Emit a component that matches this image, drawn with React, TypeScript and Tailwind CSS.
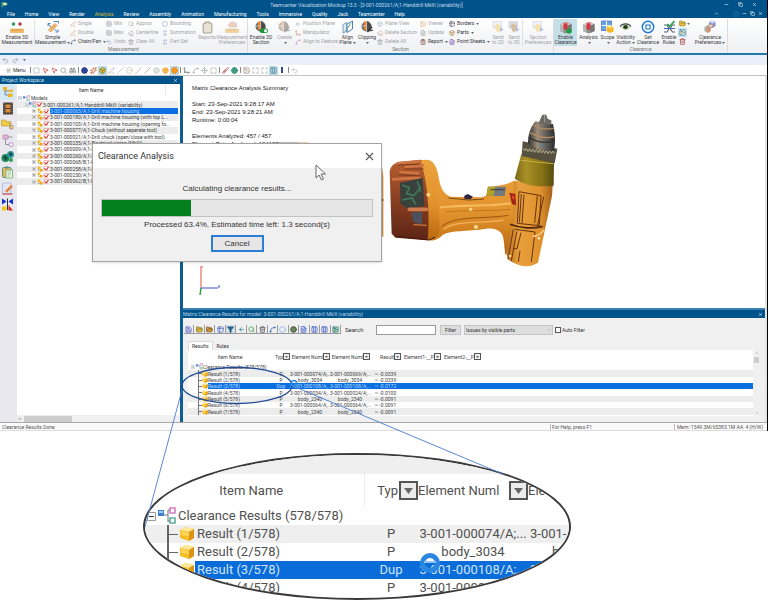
import type { ReactNode } from 'react'
import {
  ArrowLeft, Binoculars, Box, BoxSelect, Brush, Circle, CircleDot, Clipboard, ClipboardList, Columns3, Eraser,
  FileText, Filter, FolderOpen, Globe, Grid2x2, Image, Maximize, Menu, Minus, MousePointer2, Move, Move3d, PenLine,
  Redo2, Save, Search, Sigma, Slash, Sparkles, Spline, Table2, Trash2, Undo2, X, Copy, HelpCircle, ChevronUp, ChevronDown,
} from 'lucide-react'

type IconType = typeof Box

function Mini({ icon: Icon, color = '#777', size = 7, fill = 'none' }: { icon: IconType; color?: string; size?: number; fill?: string }) {
  return <Icon size={size} color={color} fill={fill} strokeWidth={2.5} className="shrink-0" aria-hidden />
}

/* ---------- drawings ---------- */

function YellowCube({ size = 6 }: { size?: number }) {
  return (
    <svg width={size} height={size} viewBox="0 0 16 16" className="shrink-0">
      <path d="M1 4 6 1l9 2v9l-5 3-9-3z" fill="#f7bd26" />
      <path d="M1 4 6 1l9 2-5 3z" fill="#ffe998" />
      <path d="M10 6l5-3v9l-5 3z" fill="#dd9416" />
      <path d="M2 5l8 2v3L2 9z" fill="#ffd65a" />
    </svg>
  )
}

function NodeIcon({ size = 7 }: { size?: number }) {
  return (
    <svg width={size} height={size} viewBox="0 0 18 18" className="shrink-0">
      <path d="M0 3h6v6H0z" fill="#3d7fd0" />
      <path d="M1 4h4v2H1z" fill="#a9cdf5" />
      <path d="M6 8h4M10 3v12M10 3h3M10 14h3" stroke="#777" fill="none" />
      <path d="M12 1h5v5h-5z" fill="#fff" stroke="#d67cc0" strokeWidth="1.6" />
      <path d="M12 11h5v5h-5z" fill="#fff" stroke="#5bb09e" strokeWidth="1.6" />
    </svg>
  )
}

function RedCheck() {
  return (
    <svg width="7" height="5" viewBox="0 0 14 10" className="shrink-0">
      <path d="M2 1h7v8H2z" fill="#fff" stroke="#e07a7a" />
      <path d="M3 4l3 4 6-7" fill="none" stroke="#e02020" strokeWidth="2" />
    </svg>
  )
}

function PartIcon() {
  return (
    <svg width="6" height="6" viewBox="0 0 12 12" className="shrink-0">
      <path d="M1 1h6v5H1z" fill="#f2bd27" />
      <path d="M6 6h5v5H6z" fill="#e9a715" />
      <path d="M3 6v3h3" fill="none" stroke="#8a7332" />
    </svg>
  )
}

function Expander({ open = false, size = 4 }: { open?: boolean; size?: number }) {
  return (
    <svg width={size} height={size} viewBox="0 0 9 9" className="shrink-0">
      <path d="M.5.5h8v8h-8z" fill="#fff" stroke="#999" />
      <path d={open ? 'M2 4.500h5' : 'M2 4.500h5M4.500 2v5'} stroke="#333" />
    </svg>
  )
}

function Blocks({ main = '#d9343b', side = '#8d8d8d', badge }: { main?: string; side?: string; badge?: string }) {
  return (
    <svg width="14" height="13" viewBox="0 0 28 26">
      <path d="M2 7 13 2l12 4v14l-12 5-11-5z" fill={side} />
      <path d="M2 7l7 3v13l-7-3z" fill="#b5b5b5" />
      <path d="M2 7l11-5 12 4-12 5z" fill="#d2d2d2" />
      <path d="M9 4l8 1v13l-8-2z" fill={main} />
      <path d="M9 4l5-2 7 2-4 1z" fill="#e8767a" />
      <path d="M17 9l8-3v14l-8 4z" fill="#777" />
      {badge && <circle cx="20" cy="20" r="5.500" fill={badge} />}
    </svg>
  )
}

function SectionIcon({ toggle = false, faded = false }: { toggle?: boolean; faded?: boolean }) {
  return (
    <svg width="15" height="14" viewBox="0 0 30 28" opacity={faded ? 0.45 : 1}>
      <circle cx="13" cy="13" r="10" fill="#6d6d6d" />
      <path d="M8 4l9-2v20l-9-3z" fill="#ef7d22" />
      <path d="M13 3a10 10 0 0 1 0 20z" fill="#4d4d4d" />
      <path d="M3 12h9M13 3v20" stroke="#ddd" strokeWidth="1.500" />
      {toggle
        ? <><rect x="11" y="17" width="17" height="9" rx="4.500" fill="#23933b" /><circle cx="23" cy="21.500" r="3" fill="#fff" /></>
        : <path d="M15 24l9-10M19 22l7-2" stroke="#333" strokeWidth="2.500" />}
    </svg>
  )
}

function RulerIcon({ hand = false }: { hand?: boolean }) {
  return (
    <svg width="14" height="14" viewBox="0 0 28 28" opacity={hand ? 0.6 : 1}>
      {hand
        ? <path d="M6 10l8-7 9 4v7H9z" fill="#e9b48a" stroke="#8893c0" />
        : <><circle cx="7" cy="8" r="3.500" fill="#2c9b57" /><circle cx="20" cy="8" r="3.500" fill="#b03a3a" /></>}
      <path d="M1 18h26v7H1z" fill="#f3b963" stroke="#e0a04a" />
      <path d="M5 18v3M9 18v4M13 18v3M17 18v4M21 18v3" stroke="#b5752a" />
    </svg>
  )
}

function SimpleMeasureIcon() {
  return (
    <svg width="14" height="14" viewBox="0 0 28 28">
      <path d="M5 20 18 7l4 4L9 24z" fill="#f7c27c" stroke="#e0872a" strokeWidth="1.500" />
      <path d="M9 16l3 3M12 13l3 3M15 10l3 3" stroke="#a9601a" />
      <path d="M4 8l6 6M17 18l5 5M4 12V7h5M24 19v5h-5M15 3h10v4" fill="none" stroke="#3c7bb5" strokeWidth="1.800" />
    </svg>
  )
}

function AlignPlaneIcon() {
  return (
    <svg width="12" height="14" viewBox="0 0 24 28">
      <path d="M2 9l8-4v17l-8 4z" fill="#dfe9f5" stroke="#5b84b5" strokeWidth="1.500" />
      <path d="M10 8l11-6v16l-11 7z" fill="#fff" stroke="#3971b0" strokeWidth="1.800" />
      <path d="M7 22 18 6" stroke="#4ba56a" strokeWidth="2" />
    </svg>
  )
}

function ScopeIcon() {
  return (
    <svg width="13" height="14" viewBox="0 0 26 28">
      <path d="M1 2h20v19H1z" fill="#6ba3e4" stroke="#3b72bd" strokeWidth="1.500" />
      <path d="M11 2v19M1 11h20" stroke="#fff" strokeWidth="2" />
      <path d="M11 14l6-3 8 3v9l-7 3-7-4z" fill="#f6b522" />
      <path d="M11 14l6-3 8 3-7 3z" fill="#ffe07c" />
    </svg>
  )
}

function EyeIcon() {
  return (
    <svg width="13" height="14" viewBox="0 0 26 28">
      <path d="M3 15c5-6 15-6 20 0-5 5-15 5-20 0z" fill="#cbd3bd" />
      <circle cx="13" cy="14" r="5" fill="#53803e" />
      <circle cx="13" cy="14" r="2.500" fill="#111" />
      <path d="M2 13c5-7 17-7 22 0" fill="none" stroke="#444" strokeWidth="2.200" />
    </svg>
  )
}

function TargetIcon() {
  return (
    <svg width="14" height="14" viewBox="0 0 28 28">
      <circle cx="14" cy="14" r="11.500" fill="#eef6ff" stroke="#2478c8" strokeWidth="2.800" />
      <path d="M10 10h8v8h-8z" fill="#fff" stroke="#2478c8" strokeWidth="2.200" />
    </svg>
  )
}

function RulesIcon() {
  return (
    <svg width="13" height="14" viewBox="0 0 26 28">
      <path d="M2 10h6l4 7-4 7H2M24 10h-5l-5 7 5 7h5" fill="none" stroke="#5c6370" strokeWidth="2.200" />
      <path d="M2 17h22" stroke="#3d68c2" strokeWidth="2" />
      <path d="M9 8l4 5L23 2" fill="none" stroke="#24a046" strokeWidth="3.200" />
    </svg>
  )
}

function ClearancePrefsIcon() {
  return (
    <svg width="14" height="14" viewBox="0 0 28 28">
      <path d="M12 4l6-3 7 3v8l-6 4-7-3z" fill="#8591d8" />
      <path d="M12 4l6-3 7 3-6 3z" fill="#d4d9f6" />
      <path d="M3 14l6-3 6 3v8l-6 4-6-4z" fill="#b5aaa2" />
      <path d="M9 17l6-3v8l-6 4z" fill="#d98c66" />
      <path d="M8 12l8-4 6 3-7 5z" fill="#e9cbb6" stroke="#8a6d5c" />
    </svg>
  )
}

function SendIcon({ view }: { view: 'blue' | 'solid' }) {
  return (
    <svg width="13" height="14" viewBox="0 0 26 28" opacity="0.55">
      <path d="M2 3h17v13H2z" fill={view === 'blue' ? '#e6edfa' : '#c4c4c4'} stroke="#8ea3cf" />
      <path d="M5 12l5-5 7 3v11l-7 4z" fill={view === 'blue' ? '#f6ce73' : '#b78c5c'} />
      <path d="M16 15l7 4-7 5z" fill="#7792cf" />
    </svg>
  )
}

function DrillScene() {
  return (
    <svg width="190" height="180" viewBox="0 0 570 540" overflow="visible" role="img" aria-label="Handdrill MkIII model">
      <defs>
        <linearGradient id="body" x1="0" x2="0" y1="0" y2="1">
          <stop offset="0" stopColor="#eda33c" /><stop offset=".55" stopColor="#e2922c" /><stop offset="1" stopColor="#b8680f" />
        </linearGradient>
        <linearGradient id="motor" x1="0" x2="1" y1="0" y2="0">
          <stop offset="0" stopColor="#b26817" /><stop offset=".3" stopColor="#e8a03d" /><stop offset=".75" stopColor="#df922c" /><stop offset="1" stopColor="#a5611a" />
        </linearGradient>
        <linearGradient id="battery" x1="0" x2="0" y1="0" y2="1">
          <stop offset="0" stopColor="#b95f32" /><stop offset=".45" stopColor="#8d4223" /><stop offset="1" stopColor="#5d2415" />
        </linearGradient>
        <linearGradient id="steel" x1="0" x2="1" y1="0" y2="0">
          <stop offset="0" stopColor="#2f2e2e" /><stop offset=".35" stopColor="#9d8c79" /><stop offset=".6" stopColor="#6d6964" /><stop offset="1" stopColor="#2c2c2d" />
        </linearGradient>
        <linearGradient id="olive" x1="0" x2="1" y1="0" y2="0">
          <stop offset="0" stopColor="#7d6a16" /><stop offset=".3" stopColor="#a88f26" /><stop offset=".7" stopColor="#857114" /><stop offset="1" stopColor="#574b12" />
        </linearGradient>
      </defs>
      {/* second housing half, mostly covered by the dialog */}
      <path d="M-315 128h70v40h-70z" fill="#3b302c" />
      <path d="M-245 128h30v40h-30z" fill="#c97a26" />
      <path d="M-90 205h97l3 25v180H-90z" fill="#c98d45" />
      <path d="M0 300h10" stroke="#5d3413" strokeWidth="5" />
      {/* handle */}
      <path d="M125 185C160 178 171 195 176 232c5 32 14 50 36 58l93 2 13-5 6-26 26-3 30-6 22-10 10 158-36 66-5-46c-2-26-22-38-52-34-60 9-105 4-130 18-14 15-30 20-46 16z" fill="url(#body)" />
      <path d="M185 380c40-35 130-22 200-34" fill="none" stroke="#9c5412" strokeWidth="3" />
      <path d="M190 388c40-30 120-16 180-28" fill="none" stroke="#f0b057" strokeWidth="4" />
      <path d="M205 294l62 6 45-3" fill="none" stroke="#7a4a16" strokeWidth="3" />
      <path d="M253 287l10-5 16 8-8 8-18-2z" fill="#302443" />
      <path d="M180 322c70-8 150-2 212-12" fill="none" stroke="#f5bb5e" strokeWidth="7" />
      <path d="M196 336c70-6 140-2 196-8" fill="none" stroke="#b06a1d" strokeWidth="2" />
      <circle cx="288" cy="381" r="6" fill="#ffdb8f" /><circle cx="272" cy="328" r="5" fill="#ffd583" />
      {/* trigger */}
      <path d="M324 260h54l-4 28h-54z" fill="#737b7d" /><path d="M324 260h22l-6 27h-20z" fill="#b3a325" />
      <path d="M332 269h42" stroke="#353b3d" strokeWidth="3" />
      {/* battery */}
      <path d="M50 187 122 179l28 5 10 38 6 170-25 29-94-8-12-12-6-186c2-12 8-22 21-26z" fill="url(#battery)" />
      <path d="M122 182c18-6 36-2 43 16 4 60 12 130 14 196l-12 20-24 6c6-60 2-140-10-196z" fill="url(#body)" />
      <path d="M50 190l70-6M74 201l58-5M58 216l60 4M36 238l85-5" stroke="#cf7544" strokeWidth="8" fill="none" />
      <path d="M52 195l66-2M74 207l57 0M57 224l64 4" stroke="#5d2a17" strokeWidth="2" fill="none" />
      <path d="M60 248l68-14 5 84-50 8-22-15z" fill="#39413c" />
      <path d="M66 255l22 8-8 18 22 6 20-26M66 300l30-6 12 20M112 244l10 32" fill="none" stroke="#3f7a59" strokeWidth="5" />
      <path d="M88 328h52" stroke="#d07c50" strokeWidth="11" strokeLinecap="round" />
      <path d="M94 338l32-3v38l-26-6z" fill="#4d515d" />
      <path d="M100 374l40 2" stroke="#cf7544" strokeWidth="4" />
      <path d="M44 408l103 12 18-8" fill="none" stroke="#45170d" strokeWidth="3" />
      <circle cx="145" cy="284" r="6" fill="#ffd583" />
      {/* motor housing */}
      <path d="M402 242 518 258l-2 30-42 200c-28 18-62 12-90-10l-10-35 24-70z" fill="url(#motor)" />
      <path d="M417 275l66 12-5 90-66-7zM405 388l60 8-11 90M424 282l-6 85M432 284l-6 85M472 287l-8 82M491 290l-19 90" fill="none" stroke="#69300f" strokeWidth="3" />
      <path d="M400 388l-16 90M410 395l-16 88M423 398l-12 48h-12M420 452l-5 34" fill="none" stroke="#6b3210" strokeWidth="3" />
      <path d="M390 373c30 12 70 14 98 6" fill="none" stroke="#4e260d" strokeWidth="5" />
      <path d="M388 278l18 4 2 34-12-4z" fill="#9f2414" /><path d="M394 284l10 8-4 8z" fill="#ff4b2f" />
      <path d="M458 409c18 0 28-10 34-20" fill="none" stroke="#ffc984" strokeWidth="5" />
      <circle cx="477" cy="415" r="4" fill="#ffe1a4" /><circle cx="390" cy="468" r="4" fill="#ffd583" />
      {/* collar and chuck */}
      <path d="M424 163l98 18-1 76c-45 6-90-2-117-21z" fill="url(#olive)" />
      <path d="M422 181l98 10" stroke="#c7b23e" strokeWidth="3" />
      <path d="M428 124l104 22-8 44-99-22z" fill="#55503f" />
      <path d="M430 145l4 8 5-8 5 10 5-9 5 10 5-9 5 10 5-9 5 10 5-9 5 10 5-9 5 10 5-9 5 10 5-9 5 9 5-8 4 8" fill="none" stroke="#b5ab8c" strokeWidth="3" />
      <path d="M466 64l53 8c6 25 8 50 3 80-28 4-56-4-78-20 0-28 6-48 22-68z" fill="url(#steel)" />
      <path d="M459 75c18 12 40 14 62 10M449 98c22 12 50 18 74 12" fill="none" stroke="#b58c64" strokeWidth="4" />
      <path d="M446 112c22 14 52 18 78 12" fill="none" stroke="#333" strokeWidth="4" />
      <path d="M482 55l5-11 12 0 4 12 12 6-3 12-36-4z" fill="#6a6964" />
      <path d="M494 44v22" stroke="#a3a196" strokeWidth="3" /><circle cx="485" cy="136" r="4" fill="#5f82a5" />
    </svg>
  )
}

function AxisTriad() {
  return (
    <svg width="26" height="32" viewBox="0 0 26 32">
      <path d="M6 4v18" stroke="#e0503c" /><path d="M6 22h17" stroke="#3c50d0" /><path d="M6 22l-1 7" stroke="#2ca03c" strokeWidth="1.500" />
      <path d="M5 1h3M5 3h2" stroke="#e0503c" /><path d="M24 19v3" stroke="#3c50d0" />
    </svg>
  )
}

/* ---------- ribbon ---------- */

function Arrow() {
  return <svg width="3" height="2" viewBox="0 0 6 4" className="inline-block align-middle ml-px"><path d="M0 0h6L3 4z" fill="#666" /></svg>
}

function Big({ icon, lines, className, faded, arrow, active }: {
  icon: ReactNode; lines: string[]; className: string; faded?: boolean; arrow?: boolean; active?: boolean
}) {
  return (
    <button className={`flex flex-col items-center whitespace-nowrap shrink-0 h-[27px] ${className} ${faded ? 'text-[#a3a3a8]' : 'text-[#3d3d42]'} ${active ? 'bg-[#c5dfe9]' : ''}`}>
      <span className="h-[16px] flex items-center">{icon}</span>
      {lines.map((line, i) => <span key={line}>{line}{arrow && i === lines.length - 1 && lines.length > 1 && <Arrow />}</span>)}
      {arrow && lines.length === 1 && <span><Arrow /></span>}
    </button>
  )
}

type SmallItem = { icon: IconType; label: string; color: string; on?: boolean; arrow?: boolean }

function SmallCol({ items, className }: { items: SmallItem[]; className: string }) {
  return (
    <div className={`flex flex-col shrink-0 ${className}`}>
      {items.map(it => (
        <button key={it.label} className={`h-[9px] flex items-center gap-px whitespace-nowrap ${it.on ? 'text-[#333338]' : 'text-[#a3a3a8]'}`}>
          <span className={it.on ? 'mr-px' : 'mr-px opacity-60'}><Mini icon={it.icon} color={it.color} size={6} /></span>
          {it.label}{it.arrow && <Arrow />}
        </button>
      ))}
    </div>
  )
}

function Group({ label, className, children }: { label: string; className: string; children: ReactNode }) {
  return (
    <section className={`shrink-0 border-r border-[#dcdce0] ${className}`} aria-label={label}>
      <div className="flex h-[28px]">{children}</div>
      <p className="text-center text-[#77777c]">{label}</p>
    </section>
  )
}

const TABS = ['File', 'Home', 'View', 'Render', 'Analysis', 'Review', 'Assembly', 'Animation', 'Manufacturing', 'Tools', 'Immersive', 'Quality', 'Jack', 'Teamcenter', 'Help']

function TitleBar() {
  return (
    <header className="bg-[#00528a] text-white text-[5px] leading-[8px]">
      <div className="flex items-center h-[9px] px-px">
        <svg width="8" height="8" viewBox="0 0 16 16"><path d="M1 2h9l4 5-5 3H5l-4 4z" fill="#4b9b7a" /><path d="M4 4h7v4H5z" fill="#d9e8c0" /></svg>
        <h1 className="flex-1 text-center text-[#c9dceb]">Teamcenter Visualization Mockup 13.3 - [3-001-000261/A;1-Handdrill MkIII (variability)]</h1>
        <div className="flex gap-[9px] pr-[9px]">
          <button aria-label="Minimize"><Mini icon={Minus} color="#fff" size={5} /></button>
          <button aria-label="Restore"><Mini icon={Copy} color="#fff" size={5} /></button>
          <button aria-label="Close"><Mini icon={X} color="#fff" size={5} /></button>
        </div>
      </div>
      <nav className="flex items-center h-[9px]">
        <div className="flex gap-[10px] pl-[7px] flex-1">
          {TABS.map(t => (
            <a key={t} href="#" className={t === 'Analysis' ? 'text-[#d8bf2c]' : ''}>{t}</a>
          ))}
        </div>
        <div className="flex gap-[3px] pr-1">
          <button className="mr-[11px]" aria-label="Collapse ribbon"><Mini icon={ChevronUp} color="#fff" size={5} /></button>
          <button aria-label="Help"><Mini icon={HelpCircle} color="#2a759f" size={6} /></button>
          <button aria-label="Minimize view"><Mini icon={Minus} color="#fff" size={5} /></button>
          <button aria-label="Restore view"><Mini icon={Copy} color="#fff" size={5} /></button>
          <button aria-label="Close view"><Mini icon={X} color="#fff" size={5} /></button>
        </div>
      </nav>
    </header>
  )
}

function Ribbon() {
  return (
    <div className="flex h-[37px] pt-px bg-linear-to-b from-white to-[#eeeff2] border-b-2 border-[#2379a8] text-[5px] leading-[5px] overflow-hidden">
      <Group label="Measurement" className="w-[248px]">
        <Big className="w-[35px] border-r border-[#e2e2e6]" icon={<RulerIcon />} lines={['Enable 3D', 'Measurement']} />
        <Big className="w-[35px]" icon={<SimpleMeasureIcon />} lines={['Simple', 'Measurement']} arrow />
        <SmallCol className="w-[36px]" items={[
          { icon: PenLine, label: 'Single', color: '#c98b3d' },
          { icon: PenLine, label: 'Double', color: '#c98b3d' },
          { icon: Spline, label: 'Chain/Fan', color: '#55708f', on: true, arrow: true },
        ]} />
        <SmallCol className="w-[22px]" items={[
          { icon: Grid2x2, label: 'Min', color: '#667' },
          { icon: Grid2x2, label: 'Max', color: '#667' },
          { icon: Undo2, label: 'Undo', color: '#5372c4' },
        ]} />
        <SmallCol className="w-[34px]" items={[
          { icon: Search, label: 'Approx', color: '#777' },
          { icon: Eraser, label: 'Centerline', color: '#777' },
          { icon: Trash2, label: 'Clear All', color: '#777' },
        ]} />
        <SmallCol className="w-[35px]" items={[
          { icon: BoxSelect, label: 'Bounding', color: '#4868b0' },
          { icon: Sigma, label: 'Summation', color: '#4868b0' },
          { icon: Sigma, label: 'Part Set', color: '#4868b0' },
        ]} />
        <Big className="w-[20px]" icon={<Clipboard size={13} color="#a9a294" fill="#e8e2d4" />} lines={['Reports']} faded />
        <Big className="w-[30px]" icon={<RulerIcon hand />} lines={['Measurement', 'Preferences']} faded />
      </Group>
      <Group label="Section" className="w-[306px]">
        <Big className="w-[26px]" icon={<SectionIcon toggle />} lines={['Enable 3D', 'Section']} />
        <Big className="w-[21px]" icon={<SectionIcon faded />} lines={['Create']} faded arrow />
        <SmallCol className="w-[43px]" items={[
          { icon: ArrowLeft, label: 'Position Plane', color: '#5b7dd0' },
          { icon: Move3d, label: 'Manipulator', color: '#c05a4a' },
          { icon: Spline, label: 'Align to Feature', color: '#b05a9a' },
        ]} />
        <Big className="w-[19px]" icon={<AlignPlaneIcon />} lines={['Align', 'Plane']} arrow />
        <Big className="w-[20px]" icon={<SectionIcon />} lines={['Clipping']} arrow />
        <SmallCol className="w-[43px]" items={[
          { icon: Box, label: 'Plane View', color: '#7f8fc0' },
          { icon: Eraser, label: 'Delete Section', color: '#c07a6a' },
          { icon: Trash2, label: 'Delete All', color: '#777' },
        ]} />
        <SmallCol className="w-[29px]" items={[
          { icon: Image, label: 'Viewer', color: '#c09a4a' },
          { icon: FileText, label: 'Update', color: '#777' },
          { icon: ClipboardList, label: 'Report', color: '#7d4a3d', on: true, arrow: true },
        ]} />
        <SmallCol className="w-[41px]" items={[
          { icon: Table2, label: 'Borders', color: '#5a5f7a', on: true, arrow: true },
          { icon: Box, label: 'Parts', color: '#a5762a', on: true, arrow: true },
          { icon: FileText, label: 'Point Sheets', color: '#7a5fb0', on: true, arrow: true },
        ]} />
        <Big className="w-[16px]" icon={<SendIcon view="blue" />} lines={['Send', 'to 2D']} faded />
        <Big className="w-[17px] border-r border-[#e2e2e6]" icon={<SendIcon view="solid" />} lines={['Send', 'to 3D']} faded />
        <Big className="w-[30px]" icon={<SendIcon view="blue" />} lines={['Section', 'Preferences']} faded />
      </Group>
      <Group label="Clearance" className="w-[174px]">
        <Big className="w-[23px]" icon={<Blocks badge="#1f9a44" />} lines={['Enable', 'Clearance']} active />
        <Big className="w-[23px]" icon={<Blocks />} lines={['Analysis']} arrow />
        <Big className="w-[15px]" icon={<ScopeIcon />} lines={['Scope']} arrow />
        <Big className="w-[21px]" icon={<EyeIcon />} lines={['Visibility', 'Action']} arrow />
        <Big className="w-[24px]" icon={<TargetIcon />} lines={['Set', 'Clearance']} />
        <Big className="w-[18px]" icon={<RulesIcon />} lines={['Enable', 'Rules']} />
        <div className="flex flex-col w-[15px] shrink-0 items-start">
          <button className="h-[9px] px-px flex items-center" aria-label="Open results"><Mini icon={FolderOpen} color="#8a7a2a" fill="#f0c33a" /><Arrow /></button>
          <button className="h-[9px] px-px flex items-center bg-[#bfe0f0]" aria-label="Show results"><Mini icon={Image} color="#3f7fc4" fill="#fbe9a8" /></button>
          <button className="h-[9px] px-px flex items-center" aria-label="Delete results"><Mini icon={Trash2} color="#a84b4b" /></button>
        </div>
        <Big className="w-[34px]" icon={<ClearancePrefsIcon />} lines={['Clearance', 'Preferences']} arrow />
      </Group>
    </div>
  )
}

const TOOLS: ({ icon: IconType; color: string; name: string; on?: boolean; fill?: string } | null)[] = [
  null,
  { icon: BoxSelect, color: '#999', name: 'Select box' },
  { icon: MousePointer2, color: '#d04040', name: 'Pick' },
  { icon: MousePointer2, color: '#d04040', name: 'Pick all' },
  { icon: Search, color: '#999', name: 'Seek' },
  { icon: Binoculars, color: '#888', name: 'Find' },
  null,
  { icon: Circle, color: '#23307a', fill: '#34449c', name: 'Sphere' },
  { icon: Sparkles, color: '#c0603a', name: 'Shade' },
  { icon: Box, color: '#8a7a2a', fill: '#e0c040', name: 'Solid', on: true },
  { icon: PenLine, color: '#bbb', name: 'Pen' },
  { icon: Slash, color: '#bbb', name: 'Line' },
  { icon: CircleDot, color: '#cdbba0', name: 'Center' },
  { icon: Slash, color: '#c8a0a0', name: 'Edge' },
  { icon: Slash, color: '#9ab08a', name: 'Axis' },
  { icon: Circle, color: '#ccc', fill: '#e0e0e0', name: 'Blank' },
  { icon: Box, color: '#f0a030', fill: '#f8c060', name: 'Part' },
  { icon: Circle, color: '#f08010', fill: '#f89820', name: 'Assembly', on: true },
  null,
  { icon: Move3d, color: '#777', name: 'Move' },
  { icon: Spline, color: '#aaa', name: 'Path' },
  { icon: Move, color: '#aaa', name: 'Pan' },
  { icon: BoxSelect, color: '#999', name: 'Frame' },
  null,
  { icon: Brush, color: '#b05050', name: 'Paint' },
  { icon: Globe, color: '#2a8a4a', fill: '#5ab0d0', name: 'World' },
  null,
  { icon: Image, color: '#aa9080', name: 'Snapshot' },
  { icon: Maximize, color: '#999', name: 'Fit' },
  { icon: Maximize, color: '#999', name: 'Fit all' },
  { icon: Columns3, color: '#5a8a9a', name: 'Compare', on: true },
]

function QuickBars() {
  return (
    <div className="text-[5px]">
      <div className="h-[10px] bg-[#ebeff9] flex items-center gap-[3px] pl-[2px]">
        <button aria-label="Undo"><Mini icon={Undo2} color="#9aa" /></button>
        <button aria-label="Redo"><Mini icon={Redo2} color="#9aa" /></button>
        <button aria-label="More" className="flex items-center"><Arrow /></button>
      </div>
      <div className="h-[11px] bg-white flex items-center pl-[6px] border-b border-[#c4c4c6]">
        <button className="flex items-center gap-[2px] w-[23px] leading-[6px]"><Mini icon={Menu} size={5} />Menu</button>
        {TOOLS.map((t, i) => t
          ? <button key={i} aria-label={t.name} className={`w-[9px] h-[9px] flex items-center justify-center shrink-0 ${t.on ? 'bg-[#b9dce8]' : ''}`}><Mini icon={t.icon} color={t.color} fill={t.fill} /></button>
          : <span key={i} className="w-px h-[6px] mx-px bg-[#888] shrink-0" />)}
        <span className="w-[2px] h-[6px] mx-[3px] bg-[#2a4aa0]" />
        <span className="w-px h-[6px] mx-[2px] bg-[#888]" />
        <button aria-label="Back"><Mini icon={Undo2} color="#bbb" /></button>
      </div>
    </div>
  )
}

/* ---------- project workspace ---------- */

const PARTS = [
  '3-001-000065/A;1-Drill machine housing',
  '3-001-000180/A;1-Drill machine housing (with top L...',
  '3-001-000103/A;1-Drill machine housing (opening fo...',
  '3-001-000077/A;1-Chuck (without seperate tool)',
  '3-001-000021/A;1-Drill chuck (open/close with tool)',
  '3-001-000235/A;1-Electrical wiring (MkIII)',
  '3-001-000009/A;1-B',
  '3-001-000260/A;1-B',
  '3-001-000068/B;1-D',
  '3-001-000258/A;1-B',
  '3-001-000230/A;1-M',
  '3-001-000062/B;1-B',
]

function SideStrip() {
  const cell = 'h-[16px] w-[15px] flex items-center justify-center'
  return (
    <div className="w-[17px] bg-[#e9e8ee] shrink-0 flex flex-col">
      <button className={`${cell} bg-[#d2e8f4]`} aria-label="Tree">
        <svg width="12" height="12" viewBox="0 0 24 24"><path d="M6 6v12h7M6 10h8" fill="none" stroke="#667" strokeWidth="1.500" /><path d="M2 2h8v7H2zM14 7h8v5h-8zM12 15h9v7h-9z" fill="#efb62a" /></svg>
      </button>
      <button className={cell} aria-label="Film">
        <svg width="12" height="13" viewBox="0 0 24 26"><path d="M2 1h20v24H2z" fill="#4b403a" /><path d="M7 5h10v7H7zM7 14h10v7H7z" fill="#d98b3b" /><path d="M4 2v22M20 2v22" stroke="#ddd" strokeDasharray="2 2" /></svg>
      </button>
      <button className={cell} aria-label="Folders">
        <svg width="13" height="12" viewBox="0 0 26 24"><path d="M1 4h8l2 3h9v9H1z" fill="#f2ca49" stroke="#b18a20" /><path d="M15 11h3v10M18 15h6v7h-6z" fill="#f6dc75" stroke="#6a6a6a" /></svg>
      </button>
      <button className={cell} aria-label="Structure">
        <svg width="12" height="13" viewBox="0 0 24 26"><path d="M2 2h10v8H2z" fill="#e6b5d8" stroke="#9b6a8e" /><path d="M7 10v11h7M12 6h9" fill="none" stroke="#777" strokeWidth="1.500" /><circle cx="18" cy="21" r="4" fill="#fff" stroke="#a565b8" strokeWidth="1.500" /></svg>
      </button>
      <button className={cell} aria-label="Clearance">
        <svg width="14" height="13" viewBox="0 0 28 26"><circle cx="9" cy="16" r="8" fill="#1f8a5a" /><circle cx="19" cy="9" r="7" fill="#2a9ba0" /><path d="M4 14l5-4 5 6-5 5zM15 8l5-4 4 5-5 4z" fill="#184f48" /><circle cx="20" cy="20" r="4" fill="#2fa24c" /></svg>
      </button>
      <button className={cell} aria-label="Reports">
        <svg width="13" height="13" viewBox="0 0 26 26"><rect x="3" y="3" width="17" height="20" rx="2" fill="#e8b95a" stroke="#4e9a8a" strokeWidth="2" /><path d="M8 1h7v4H8z" fill="#5a8a8a" /><path d="M10 8h13v16H10z" fill="#f4fae8" stroke="#6aa06a" strokeWidth="1.500" /><path d="M13 12h7M13 16h7M13 20h5" stroke="#7ab07a" strokeWidth="1.500" /></svg>
      </button>
      <button className={cell} aria-label="Markup">
        <svg width="13" height="13" viewBox="0 0 26 26"><path d="M3 2h17v22H3z" fill="#dfe6f4" stroke="#8a9ac0" /><path d="M8 18 20 6l4 3-12 12z" fill="#e4813a" /><path d="M3 24h20" stroke="#c33" strokeWidth="2" /></svg>
      </button>
      <button className={cell} aria-label="Mirror">
        <svg width="13" height="13" viewBox="0 0 26 26"><path d="M2 1l9 6-9 6z" fill="#1030d8" /><path d="M24 1l-9 6 9 6z" fill="#1030d8" /><path d="M13 1v23" stroke="#234" strokeWidth="2" /><path d="M2 17h9v8H2z" fill="#f2c81e" /><path d="M15 14l9 11h-9z" fill="#e22a1e" /></svg>
      </button>
    </div>
  )
}

function Workspace() {
  return (
    <aside className="w-[180px] shrink-0 flex flex-col bg-white text-[5px] leading-[6px]">
      <div className="h-[8px] bg-[#00528a] text-[#cfe2ef] flex items-center px-[2px] justify-between">
        <h2 className="leading-[8px]">Project Workspace</h2>
        <button aria-label="Close workspace"><Mini icon={X} color="#fff" size={5} /></button>
      </div>
      <div className="flex flex-1">
        <SideStrip />
        <div className="flex-1 min-w-0 flex flex-col">
          <div className="h-[11px] pt-[3px] mr-[14px] text-center border-r border-[#e8e8e8]">Item Name</div>
          <ul className="h-[90px] mr-[2px] flex flex-col text-[#3a3a3a] whitespace-nowrap">
            <li className="flex-1 min-h-0 flex items-center pl-px gap-px"><Expander open /><NodeIcon />Models</li>
            <li className="flex-1 min-h-0 flex items-center pl-[8px] bg-[#ececec]"><Expander open /><NodeIcon /><RedCheck />3-001-000261/A;1-Handdrill MkIII (variability)</li>
            {PARTS.map((p, i) => (
              <li key={p} className={`flex-1 min-h-0 flex items-center pl-[15px] overflow-hidden ${i % 2 ? 'bg-[#ececec]' : ''}`}>
                <Expander /><span className="w-px" /><PartIcon /><RedCheck />
                <span className={`flex-1 min-w-0 self-stretch ${i === 0 ? 'bg-[#0a6fe0] text-[#b5d8ff]' : ''}`}>{p}</span>
              </li>
            ))}
          </ul>
          <div className="mt-auto h-[7px] bg-[#f0f0f0] flex items-center gap-[2px] px-px">
            <Mini icon={ArrowLeft} size={4} />
            <span className="h-[6px] w-[48px] bg-[#cdcdcd]" />
          </div>
        </div>
      </div>
    </aside>
  )
}

/* ---------- results ---------- */

function DropButton({ large = false }: { large?: boolean }) {
  return (
    <button aria-label="Filter column" className={`shrink-0 bg-[#ececec] border-[#555] flex items-center justify-center ${large ? 'w-[19px] h-[19px] border-2' : 'w-[7px] h-[7px] border'}`}>
      <svg width={large ? 9 : 3} height={large ? 6 : 2} viewBox="0 0 9 6"><path d="M0 0h9L4.500 6z" fill="#666" /></svg>
    </button>
  )
}

const RESULTS = [
  ['Result (1/578)', 'P', '3-001-000074/A;...', '3-001-000069/A;...', '-0.0339'],
  ['Result (2/578)', 'P', 'body_3034', 'body_3034', '-0.0339'],
  ['Result (3/578)', 'Dup', '3-001-000108/A;...', '3-001-000108/A;...', '-0.0172'],
  ['Result (4/578)', 'P', '3-001-000034/A;...', '3-001-000024/A;...', '-0.0100'],
  ['Result (5/578)', 'P', 'body_2340', 'body_2340', '-0.0091'],
  ['Result (6/578)', 'P', '3-001-000064/A;...', '3-001-000064/A;...', '-0.0091'],
  ['Result (7/578)', 'P', 'body_2340', 'body_2340', '-0.0091'],
]

const RESULT_TOOLS: { icon: IconType; color: string; name: string; fill?: string; on?: boolean }[] = [
  { icon: Save, color: '#4a55c0', name: 'Save' },
  { icon: FolderOpen, color: '#6a6420', fill: '#f0c33a', name: 'Open' },
  { icon: FolderOpen, color: '#6a4420', fill: '#e0a33a', name: 'Merge' },
  { icon: Table2, color: '#5a6ac0', name: 'Structure' },
  { icon: Filter, color: '#1c4a70', fill: '#2a6a90', name: 'Filter', on: true },
  { icon: ArrowLeft, color: '#2a8a8a', name: 'Back' },
  { icon: Search, color: '#3a9a4a', name: 'Zoom' },
  { icon: Trash2, color: '#556', name: 'Delete' },
  { icon: Spline, color: '#2a6ac0', name: 'Link' },
  { icon: Circle, color: '#7aaae0', name: 'Highlight' },
  { icon: Circle, color: '#444', fill: '#6a8a5a', name: 'Visibility' },
  { icon: FileText, color: '#3a5ac0', name: 'Report' },
  { icon: Columns3, color: '#3a5ac0', name: 'Columns' },
  { icon: Columns3, color: '#3a5ac0', name: 'Layout' },
  { icon: Image, color: '#2a6a8a', fill: '#a8d8a0', name: 'Picture' },
]

function ResultsTable() {
  return (
    <table className="w-full table-fixed border-collapse text-[5px] leading-[6px] text-[#444] whitespace-nowrap">
      <colgroup>
        <col className="w-[84px]" /><col className="w-[18px]" /><col className="w-[40px]" /><col className="w-[40px]" />
        <col className="w-[31px]" /><col className="w-[40px]" /><col className="w-[40px]" /><col />
      </colgroup>
      <thead>
        <tr className="h-[13px]">
          <th className="font-normal p-0">Item Name</th>
          {['Typ', 'Element Numl', 'Element Numl', 'Result', 'Element1-__P', 'Element2-__P'].map((h, i) => (
            <th key={i} className="font-normal p-0"><div className="flex justify-end items-center"><span>{h}</span><DropButton /></div></th>
          ))}
          <th className="p-0" aria-label="Spacer" />
        </tr>
      </thead>
      <tbody>
        <tr className="h-[7px]"><td colSpan={8} className="p-0"><div className="flex items-center h-[7px] pl-[3px]"><Expander open /><span className="w-px" /><NodeIcon />Clearance Results (578/578)</div></td></tr>
        {RESULTS.map((r, i) => {
          const sel = i === 2
          const bg = sel ? 'bg-[#0a6fe0] text-[#b5d8ff]' : i % 2 ? '' : 'bg-[#ececec]'
          const h = i % 3 ? 'h-[6px]' : 'h-[7px]'
          return (
            <tr key={r[0]} className={sel ? '' : bg}>
              <td className="p-0">
                <div className={`flex items-center pl-[10px] ${h}`}>
                  <span className={`w-[4px] border-l border-[#777] flex items-center ${h}`}><span className="w-full h-px bg-[#777]" /></span>
                  <YellowCube />
                  <span className={`flex-1 ${sel ? bg : ''}`}>{r[0]}</span>
                </div>
              </td>
              <td className={`p-0 text-center ${bg}`}>{r[1]}</td>
              <td className={`p-0 text-center ${bg}`}>{r[2]}</td>
              <td className={`p-0 text-center ${bg}`}>{r[3]}</td>
              <td className={`p-0 text-center ${bg}`}>~ {r[4]}</td>
              <td colSpan={3} className={`p-0 ${bg}`} />
            </tr>
          )
        })}
      </tbody>
    </table>
  )
}

function ResultsPanel() {
  return (
    <section className="bg-[#f0f0f0] text-[5px] leading-[6px] border-t-2 border-[#3b82b4]">
      <div className="h-[8px] bg-[#00528a] text-[#b9d3e6] flex items-center justify-between pr-[2px]">
        <h2 className="leading-[8px]">Matrix Clearance Results for model: 3-001-000261/A;1-Handdrill MkIII (variability)</h2>
        <button aria-label="Close results"><Mini icon={X} color="#fff" size={5} /></button>
      </div>
      <div className="h-[23px] flex items-center pl-px">
        <div className="flex w-[157px]">
          {RESULT_TOOLS.map(t => (
            <button key={t.name} aria-label={t.name} className={`flex-1 h-[9px] flex items-center justify-center border-r border-b border-[#9a9a9a] ${t.on ? 'bg-[#cfe0ea]' : ''}`}><Mini icon={t.icon} color={t.color} fill={t.fill} /></button>
          ))}
        </div>
        <label htmlFor="search" className="ml-[4px] w-[31px] text-[6px]">Search</label>
        <input id="search" className="w-[60px] h-[10px] bg-white border border-[#999]" />
        <button className="ml-[4px] w-[21px] h-[10px] bg-[#dedede] border border-[#c4c4c4]">Filter</button>
        <div className="ml-[3px] w-[89px] h-[10px] relative">
          <select aria-label="Issue filter" className="appearance-none w-full h-full block bg-[#dedede] border border-[#c4c4c4] text-[5px] leading-[6px] pl-px"><option>Issues by visible parts</option></select>
          <span className="absolute right-[2px] top-[3px] pointer-events-none"><Mini icon={ChevronDown} size={4} /></span>
        </div>
        <input id="auto" type="checkbox" className="appearance-none ml-[2px] w-[6px] h-[6px] bg-white border border-[#555]" />
        <label htmlFor="auto" className="ml-px">Auto Filter</label>
      </div>
      <div className="h-[9px] flex items-end gap-px pl-[5px]">
        <button className="bg-white border border-b-0 border-[#d8d8d8] px-[3px] h-[9px]">Results</button>
        <button className="px-[3px] h-[8px]">Rules</button>
      </div>
      <div className="ml-[5px] mr-[5px] h-[66px] bg-white flex overflow-hidden">
        <div className="flex-1 min-w-0"><ResultsTable /></div>
        <div className="w-[7px] bg-[#f0f0f0] flex flex-col items-center py-px">
          <Mini icon={ChevronUp} size={4} />
          <span className="w-[5px] h-[6px] mt-[2px] bg-[#cdcdcd]" />
          <span className="mt-auto"><Mini icon={ChevronDown} size={4} /></span>
        </div>
      </div>
      <div className="h-[6px]" />
    </section>
  )
}

function Viewport() {
  return (
    <section className="relative bg-white h-[232px] pl-[9px] pt-[8px]">
      <div className="absolute left-[197px] top-[24px]"><DrillScene /></div>
      <div className="absolute left-[12px] top-[190px]"><AxisTriad /></div>
      <div className="relative text-[6px] leading-[8px] font-['Liberation_Sans',sans-serif] text-[#222] whitespace-pre">
        <p>Matrix Clearance Analysis Summary</p>
        <p className="mt-2">Start: 23-Sep-2021 9:28:17 AM</p>
        <p>End: 23-Sep-2021 9:28:21 AM</p>
        <p>Runtime: 0:00:04</p>
        <p className="mt-2">Elements Analyzed: 457 / 457</p>
        <p>Element Pairs Analyzed: 104196</p>
      </div>
    </section>
  )
}

function ClearanceDialog() {
  return (
    <div role="dialog" aria-labelledby="dlg" className="absolute left-[92px] top-[143px] w-[290px] bg-[#f0f0f0] border border-[#a3a3a3] shadow-sm text-[#333] text-[8px] leading-[10px] font-['Liberation_Sans',sans-serif]">
      <div className="bg-white h-[24px] px-[5px] flex items-center justify-between">
        <h2 id="dlg" className="text-[9px] font-['Roboto',sans-serif]">Clearance Analysis</h2>
        <button aria-label="Close"><X size={13} color="#555" strokeWidth={2} /></button>
      </div>
      <div className="px-2 pt-[16px] pb-[9px] text-center flex flex-col items-center">
        <p>Calculating clearance results...</p>
        <div role="progressbar" aria-valuenow={33} className="mt-[5px] w-full h-[18px] bg-[#e6e6e6] border border-[#c2c2c2]">
          <div className="h-full w-[33%] bg-[#06801f]" />
        </div>
        <p className="mt-[3px]">Processed 63.4%, Estimated time left: 1.3 second(s)</p>
        <button className="mt-[5px] w-[53px] h-[17px] border-2 border-[#2a7fd4] bg-[#e6e6e6]">Cancel</button>
      </div>
      <svg width="12" height="17" viewBox="0 0 12 17" className="absolute left-[222px] top-[20px]"><path d="M1 1v13l3-3 2.500 5 2-1-2.500-5h4.500z" fill="#fff" stroke="#666" /></svg>
    </div>
  )
}

/* ---------- magnified detail ---------- */

function Magnifier() {
  return (
    <figure className="mt-[22px] ml-[143px] w-[428px] h-[147px] rounded-[50%] overflow-hidden border-2 border-[#3a3a3a] bg-white text-[13px] leading-[18px] text-[#505050] font-['Roboto',sans-serif]">
      <div className="h-[19px] bg-[#efefef]" />
      <table className="w-full table-fixed border-collapse whitespace-nowrap">
        <colgroup><col className="w-[219px]" /><col className="w-[54px]" /><col className="w-[110px]" /><col /></colgroup>
        <thead>
          <tr className="h-[33px]">
            <th className="font-normal p-0 pr-[6px] border-r border-[#eee]">Item Name</th>
            <th className="font-normal p-0"><div className="flex justify-end items-center gap-px">Typ<DropButton large /></div></th>
            <th className="font-normal p-0"><div className="flex items-center justify-between"><span>Element Numl</span><DropButton large /></div></th>
            <th className="font-normal p-0 text-left">Ele</th>
          </tr>
        </thead>
        <tbody>
          <tr><td colSpan={4} className="p-0"><div className="flex items-center h-[18px] pl-[2px] gap-[2px]"><Expander open size={9} /><NodeIcon size={18} />Clearance Results (578/578)</div></td></tr>
          {RESULTS.slice(0, 4).map((r, i) => {
            const sel = i === 2
            const blue = sel ? 'bg-[#0a6cd8] text-[#cfe4fb]' : ''
            return (
              <tr key={r[0]} className={i === 0 ? 'bg-[#efefef]' : ''}>
                <td className="p-0">
                  <div className="flex items-center h-[18px] pl-[22px]">
                    <span className="w-[11px] h-[18px] mr-px border-l-2 border-[#666] flex items-center"><span className="w-full h-px bg-[#666]" /></span>
                    <YellowCube size={16} />
                    <span className={`flex-1 pl-[2px] ${blue}`}>{r[0]}</span>
                  </div>
                </td>
                <td className={`p-0 text-center ${blue}`}>{r[1]}</td>
                <td className={`p-0 text-center ${blue}`}>{r[2]}</td>
                <td className={`p-0 ${i === 1 ? 'pl-[24px]' : 'pl-[2px]'} ${blue}`}>{r[3].slice(0, i === 1 ? 1 : 6)}</td>
              </tr>
            )
          })}
        </tbody>
      </table>
    </figure>
  )
}

function Callout() {
  return (
    <svg width="768" height="601" viewBox="0 0 768 601" className="absolute left-0 top-0 pointer-events-none" fill="none" aria-hidden>
      <ellipse cx="237" cy="385.500" rx="55" ry="18" stroke="#234a94" strokeWidth="1.300" />
      <path d="M182 390 145 527M293 386l212 89" stroke="#4a7bd0" strokeWidth=".9" />
      <circle cx="294" cy="383" r="2.500" stroke="#2a8ae8" strokeWidth="1.500" />
      <circle cx="430" cy="563" r="7.500" stroke="#2a86e0" strokeWidth="5" />
      <path d="M424 562h12" stroke="#bfe0ff" strokeWidth="1.500" />
    </svg>
  )
}

export default function App() {
  return (
    <div className="relative w-full min-h-screen bg-white overflow-hidden font-['Roboto',sans-serif] text-[#333]">
      <main className="relative border-r border-black">
        <TitleBar />
        <Ribbon />
        <QuickBars />
        <div className="flex">
          <Workspace />
          <div className="flex-1 min-w-0 border-l-[3px] border-r-2 border-l-[#0d5c92] border-r-[#e4e4e4]">
            <Viewport />
            <ResultsPanel />
          </div>
        </div>
        <footer className="h-[9px] border-t border-[#a8a8a8] bg-[#fafafa] flex items-center text-[5px] leading-[6px] text-[#555] border-b border-b-[#ddd]">
          <span className="flex-1 pl-[2px]">Clearance Results Done</span>
          <span className="w-[124px] border-l border-[#bbb] pl-px">For Help, press F1</span>
          <span className="w-[93px] border-l border-[#bbb] pl-[2px]">Mem: 1549.3M/65383.1M AA: 4 (H/W)</span>
        </footer>
        <ClearanceDialog />
      </main>
      <Magnifier />
      <Callout />
    </div>
  )
}
